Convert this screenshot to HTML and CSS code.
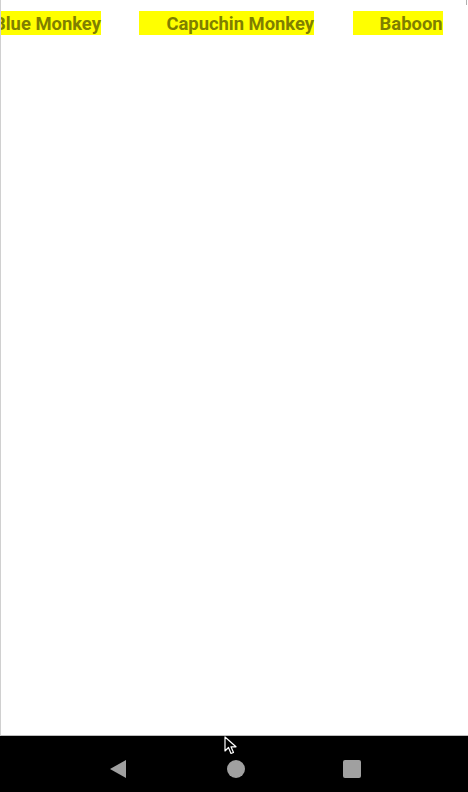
FILE: index.html
```html
<!DOCTYPE html>
<html>
<head>
<meta charset="utf-8">
<link rel="stylesheet" href="styles.css">
</head>
<body>
<div class="screen">
  <div class="content">
    <div class="tabs">
      <div class="tab tab-first">Blue Monkey</div>
      <div class="tab">Capuchin Monkey</div>
      <div class="tab">Baboon</div>
    </div>
    <span class="corner-mark"></span>
  </div>
  <div class="navbar">
    <svg class="nav-icon" width="18" height="18" viewBox="0 0 18 18"><polygon points="0,9 16,0 16,18" fill="#a0a0a0"/></svg>
    <svg class="nav-icon" width="18" height="18" viewBox="0 0 18 18"><circle cx="9" cy="9" r="9" fill="#a0a0a0"/></svg>
    <svg class="nav-icon" width="18" height="18" viewBox="0 0 18 18"><rect x="0" y="0" width="18" height="18" rx="2" fill="#a0a0a0"/></svg>
    <svg class="cursor" width="14" height="20" viewBox="0 0 14 20"><path d="M1,1 L1,15 L4.5,11.5 L7,17.5 L9.5,16.5 L7,10.8 L12,10.8 Z" fill="#000" stroke="#fff" stroke-width="1.2" stroke-linejoin="round"/></svg>
  </div>
</div>
</body>
</html>
```
FILE: styles.css
```css
html, body {
  margin: 0;
  padding: 0;
  background: #ffffff;
}
.screen {
  width: 468px;
  height: 792px;
  display: flex;
  flex-direction: column;
  overflow: hidden;
  font-family: Roboto, "Liberation Sans", sans-serif;
}
.content {
  flex: 1;
  position: relative;
  border-left: 1px solid #d0d0d0;
  border-bottom: 1px solid #bdbdbd;
  background: #ffffff;
  overflow: hidden;
}
.tabs {
  display: flex;
  gap: 38.5px;
  padding-top: 11px;
  margin-left: -7px;
}
.tab {
  background: #ffff00;
  color: #7f7f00;
  font-weight: 700;
  font-size: 18.4px;
  line-height: 23px;
  padding-top: 1px;
  padding-left: 27px;
  white-space: nowrap;
}
.tab-first {
  padding-left: 0;
}
.corner-mark {
  position: absolute;
  right: 1px;
  top: 0;
  width: 1px;
  height: 5px;
  background: #b0b0b0;
}
.navbar {
  height: 56px;
  background: #000000;
  display: flex;
  align-items: center;
  justify-content: space-between;
  padding: 0 107px 0 110px;
  position: relative;
}
.navbar .nav-icon {
  display: block;
  margin-top: 9px;
}
.cursor {
  position: absolute;
  left: 224px;
  top: 0px;
}
```
